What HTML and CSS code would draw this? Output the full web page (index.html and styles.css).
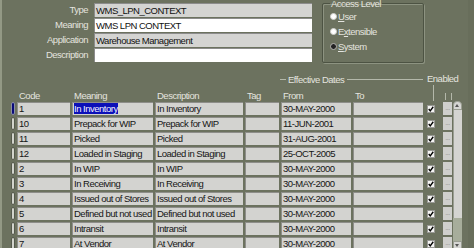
FILE: index.html
```html
<!DOCTYPE html>
<html lang="en">
<head>
    <meta charset="UTF-8">
    <title>Lookups - WMS_LPN_CONTEXT</title>
    <link rel="stylesheet" href="styles.css">
</head>
<body>
<div class="window">
    <div class="top">
        <div class="fields">
            <label class="lbl">Type</label><div class="field ro">WMS_LPN_CONTEXT</div>
            <label class="lbl">Meaning</label><div class="field">WMS LPN CONTEXT</div>
            <label class="lbl">Application</label><div class="field ro">Warehouse Management</div>
            <label class="lbl">Description</label><div class="field"></div>
        </div>
        <fieldset class="access">
            <legend>Access Level</legend>
            <div class="radio"><span class="dot"></span><u>U</u>ser</div>
            <div class="radio"><span class="dot"></span>E<u>x</u>tensible</div>
            <div class="radio"><span class="dot on"></span><u>S</u>ystem</div>
        </fieldset>
    </div>

    <div class="lookup">
        <div class="table">
            <div class="row group-head">
                <div class="dates"><span>Effective Dates</span></div>
                <div class="enabled">Enabled</div>
            </div>
            <div class="row col-head">
                <div></div>
                <div>Code</div>
                <div>Meaning</div>
                <div>Description</div>
                <div>Tag</div>
                <div>From</div>
                <div>To</div>
                <div class="tick-line"></div>
                <div class="brackets"></div>
            </div>
            <div id="rows"></div>
        </div>
        <div class="scrollbar">
            <div class="arrow up"></div>
            <div class="thumb"></div>
            <div class="track"></div>
            <div class="arrow down"></div>
        </div>
    </div>
</div>

<script>
    const lookups = [
        ['1', 'In Inventory', 'In Inventory', '30-MAY-2000'],
        ['10', 'Prepack for WIP', 'Prepack for WIP', '11-JUN-2001'],
        ['11', 'Picked', 'Picked', '31-AUG-2001'],
        ['12', 'Loaded in Staging', 'Loaded in Staging', '25-OCT-2005'],
        ['2', 'In WIP', 'In WIP', '30-MAY-2000'],
        ['3', 'In Receiving', 'In Receiving', '30-MAY-2000'],
        ['4', 'Issued out of Stores', 'Issued out of Stores', '30-MAY-2000'],
        ['5', 'Defined but not used', 'Defined but not used', '30-MAY-2000'],
        ['6', 'Intransit', 'Intransit', '30-MAY-2000'],
        ['7', 'At Vendor', 'At Vendor', '30-MAY-2000']
    ];

    const rows = document.getElementById('rows');
    const tick = '<svg viewBox="0 0 8 8" width="6" height="6"><path d="M1 4 L3 6.5 L7 1" fill="none" stroke="#000" stroke-width="1.8"/></svg>';

    lookups.forEach((item, i) => {
        const row = document.createElement('div');
        row.className = 'row line';
        const meaning = i === 0 ? '<span class="sel">' + item[1] + '</span>' : item[1];
        row.innerHTML =
            '<div class="ind' + (i === 0 ? ' current' : '') + '"></div>' +
            '<div class="cell">' + item[0] + '</div>' +
            '<div class="cell">' + meaning + '</div>' +
            '<div class="cell">' + item[2] + '</div>' +
            '<div class="cell"></div>' +
            '<div class="cell">' + item[3] + '</div>' +
            '<div class="cell"></div>' +
            '<div class="chk-wrap"><span class="chk">' + tick + '</span></div>' +
            '<div class="more">...</div>';
        rows.appendChild(row);
    });
</script>
</body>
</html>
```

FILE: styles.css
```css
html, body {
    margin: 0;
    padding: 0;
}
body {
    width: 474px;
    height: 248px;
    overflow: hidden;
    background-color: #6c725f;
    font-family: "Liberation Sans", Arial, sans-serif;
    font-size: 9.5px;
    letter-spacing: -0.5px;
    color: #e4e4df;
}
.window {
    height: 248px;
    border-left: 2px solid #939985;
    border-right: 6px solid #60665450;
    box-sizing: border-box;
}

/* header block */
.top {
    display: flex;
    padding-top: 3px;
}
.fields {
    display: grid;
    grid-template-columns: 86px 218px;
    grid-auto-rows: 14px;
    row-gap: 1px;
    column-gap: 6px;
}
.lbl {
    text-align: right;
    line-height: 14px;
}
.field {
    background-color: #fff;
    color: #111;
    border-top: 1px solid #8c8c8c;
    border-left: 1px solid #8c8c8c;
    line-height: 13px;
    padding-left: 1px;
    white-space: nowrap;
}
.field.ro {
    background-color: #d4d4d2;
}
.access {
    margin: -5px 0 0 10px;
    padding: 0 0 0 7px;
    width: 102px;
    height: 65px;
    box-sizing: border-box;
    border: 1px solid #4d5343;
    border-radius: 2px;
    box-shadow: inset 1px 1px 0 #8d9381, 1px 1px 0 #8d9381;
}
.access legend {
    padding: 0 1px;
    line-height: 11px;
    margin-left: 0;
}
.radio {
    display: flex;
    align-items: center;
    line-height: 15px;
    height: 15px;
}
.dot {
    width: 5px;
    height: 5px;
    border-radius: 50%;
    background: #fff;
    border: 1px solid #cfcfcb;
    margin-right: 1px;
}
.dot.on {
    background: #222;
    border-color: #b8b8b4;
}

/* multi-row block */
.lookup {
    display: flex;
    margin-top: 10px;
}
.table {
    margin-left: 9px;
}
.row {
    display: grid;
    grid-template-columns: 4px 53px 81px 88px 34px 70px 70px 16px 9px;
    column-gap: 2px;
}
.group-head {
    height: 12px;
    line-height: 11px;
}
.dates {
    grid-column: 6 / 8;
    display: flex;
    align-items: center;
    margin-left: -1px;
}
.dates::before,
.dates::after {
    content: "";
    height: 1px;
    background: #b4b8aa;
}
.dates::before {
    width: 6px;
    margin-right: 2px;
}
.dates::after {
    flex: 1;
    margin-left: 3px;
}
.enabled {
    grid-column: 8 / 10;
    margin-left: 2px;
    white-space: nowrap;
}
.col-head {
    height: 16px;
    line-height: 11px;
}
.col-head div {
    align-self: end;
    padding-left: 2px;
}
.col-head .tick-line {
    align-self: stretch;
    width: 1px;
    margin-left: 8px;
    padding: 0;
    background: #b4b8aa;
}
.col-head .brackets {
    height: 7px;
    margin: 0 0 1px 2px;
    padding: 0;
    border-left: 1px solid #b4b8aa;
    border-right: 1px solid #b4b8aa;
}
#rows {
    padding-top: 1px;
}
.line {
    height: 13px;
    margin-bottom: 2px;
}
.ind {
    background: #d2d4cc;
    border: 1px solid #55594c;
    border-radius: 2px;
    box-sizing: border-box;
}
.ind.current {
    background: #0a0a7a;
    border-color: #8a8fa8;
}
.cell {
    background: #d3d3d0;
    color: #151515;
    border-top: 1px solid #8e8e8a;
    border-left: 1px solid #8e8e8a;
    line-height: 12px;
    padding-left: 1px;
    white-space: nowrap;
    overflow: hidden;
}
.sel {
    background: #0c10b8;
    color: #f0f0ff;
}
.chk-wrap {
    display: flex;
    align-items: center;
}
.chk {
    width: 8px;
    height: 8px;
    margin-left: 2px;
    box-sizing: border-box;
    background: #f4f4f2;
    border: 1px solid #9a9a96;
    display: flex;
    align-items: center;
    justify-content: center;
}
.more {
    background: #cfcfcc;
    color: #8f8f8c;
    font-size: 7px;
    line-height: 12px;
    text-align: center;
    letter-spacing: -0.5px;
}

/* scrollbar */
.scrollbar {
    width: 9px;
    margin: 28px 0 0 1px;
    display: flex;
    flex-direction: column;
}
.arrow {
    height: 9px;
    background: #d6d6d3;
    border: 1px solid #9a9e92;
    box-sizing: border-box;
    position: relative;
}
.arrow.up {
    border-radius: 4px 4px 0 0;
}
.arrow::after {
    content: "";
    position: absolute;
    left: 1px;
    border-left: 2.5px solid transparent;
    border-right: 2.5px solid transparent;
}
.arrow.up::after {
    top: 2px;
    border-bottom: 3px solid #555;
}
.arrow.down::after {
    top: 2px;
    border-top: 3px solid #555;
}
.thumb {
    height: 108px;
    background: #d4d4d1;
    border-left: 1px solid #9a9e92;
}
.track {
    height: 23px;
    background: #a7ad9b;
}
```
